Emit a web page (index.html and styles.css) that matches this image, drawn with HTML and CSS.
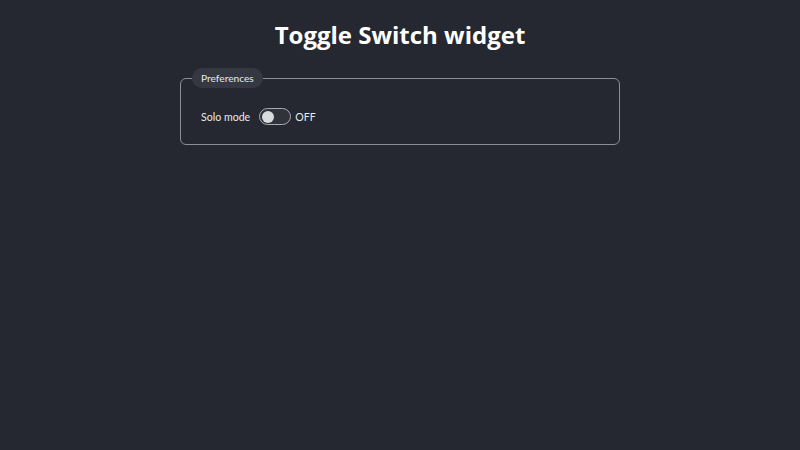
FILE: index.html
```html
<!DOCTYPE html>
<html>
<head>
<meta charset="utf-8">
<link rel="stylesheet" href="styles.css">
</head>
<body>
<h1 class="title">Toggle Switch widget</h1>
<fieldset class="prefs">
  <legend class="prefs-legend">Preferences</legend>
  <div class="row">
    <span class="label">Solo mode</span>
    <span class="switch"><span class="knob"></span></span>
    <span class="state">OFF</span>
  </div>
</fieldset>
</body>
</html>
```
FILE: styles.css
```css
html, body {
  margin: 0;
  padding: 0;
  background: #252830;
  color: #e8e9ec;
  font-family: "Open Sans", "Noto Sans", sans-serif;
}
.title {
  margin: 0;
  padding-top: 17px;
  text-align: center;
  font-size: 24px;
  font-weight: 700;
  color: #ffffff;
  line-height: 36px;
}
.prefs {
  box-sizing: border-box;
  width: 440px;
  margin: 15px auto 0;
  border: 1.5px solid #8b8e96;
  border-radius: 6px;
  padding: 0 11px 19px;
  font-family: "Lato", "Open Sans", sans-serif;
}
.prefs-legend {
  background: #353842;
  border-radius: 10px;
  padding: 0 9px;
  font-size: 10.2px;
  line-height: 20px;
  color: #e6e7ea;
}
.row {
  display: flex;
  align-items: center;
  padding: 20px 0 0 9px;
  font-size: 10.6px;
}
.switch {
  box-sizing: border-box;
  width: 32px;
  height: 17px;
  margin: 0 4px 0 9px;
  border: 1.5px solid #a8abb2;
  border-radius: 9px;
  background: #30333b;
  display: flex;
  align-items: center;
  padding-left: 2px;
}
.knob {
  width: 12px;
  height: 12px;
  border-radius: 50%;
  background: #dadbdf;
}
.state {
  color: #e8e9ec;
}
```
